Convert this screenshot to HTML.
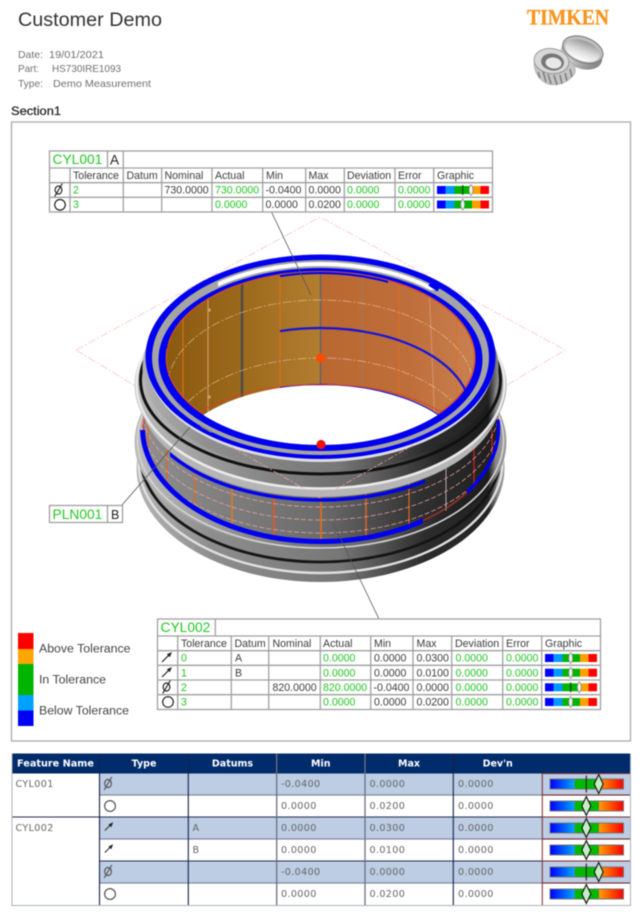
<!DOCTYPE html>
<html><head><meta charset="utf-8"><title>Customer Demo</title>
<style>
html,body{margin:0;padding:0;background:#fff;width:644px;height:914px;overflow:hidden}
svg{display:block;filter:blur(.5px)}
text{font-family:"Liberation Sans",sans-serif}
.t{font-size:10.6px;fill:#3c3c3c}
.g{font-size:10.6px;fill:#22c522}
.b{font-family:"DejaVu Sans",sans-serif;font-size:9.6px;fill:#666;letter-spacing:.35px}
.h{font-family:"DejaVu Sans",sans-serif;font-size:9.5px;font-weight:bold;fill:#fff;text-anchor:middle}
.l{stroke:#a0a0a0;stroke-width:1.3;fill:none}
.i{fill:none;stroke:#222;stroke-width:1.2}
.k{fill:none;stroke:#555;stroke-width:1.2}
</style></head><body>
<svg width="644" height="914" viewBox="0 0 644 914" xmlns="http://www.w3.org/2000/svg">
<defs>
<linearGradient id="gr1" gradientUnits="userSpaceOnUse" x1="135" x2="507" y1="0" y2="0"><stop offset="0" stop-color="#b5b5b5"/><stop offset=".2" stop-color="#8e8e8e"/><stop offset=".55" stop-color="#777"/><stop offset=".78" stop-color="#2c2c2c"/><stop offset=".95" stop-color="#222"/><stop offset=".975" stop-color="#8a8a8a"/><stop offset="1" stop-color="#a0a0a0"/></linearGradient>
<linearGradient id="gr2" gradientUnits="userSpaceOnUse" x1="135" x2="507" y1="0" y2="0"><stop offset="0" stop-color="#bcbcbc"/><stop offset=".3" stop-color="#8c8c8c"/><stop offset=".62" stop-color="#666"/><stop offset=".82" stop-color="#262626"/><stop offset=".95" stop-color="#1c1c1c"/><stop offset=".97" stop-color="#888"/><stop offset="1" stop-color="#a0a0a0"/></linearGradient>
<linearGradient id="band" gradientUnits="userSpaceOnUse" x1="140" x2="500" y1="0" y2="0"><stop offset="0" stop-color="#8f8f8f"/><stop offset=".5" stop-color="#6c6c6c"/><stop offset=".78" stop-color="#303030"/><stop offset="1" stop-color="#1d1d1d"/></linearGradient>
<linearGradient id="wall" gradientUnits="userSpaceOnUse" x1="166" x2="476" y1="0" y2="0"><stop offset="0" stop-color="#8a5a10"/><stop offset=".25" stop-color="#9c6a1c"/><stop offset=".497" stop-color="#b37d30"/><stop offset=".5" stop-color="#ba6830"/><stop offset=".8" stop-color="#bf6f3c"/><stop offset="1" stop-color="#c98150"/></linearGradient>
<linearGradient id="bb" x1="0" x2="1" y1="0" y2="0"><stop offset="0" stop-color="#0000ff"/><stop offset="1" stop-color="#00a6ff"/></linearGradient>
<linearGradient id="ob" x1="0" x2="1" y1="0" y2="0"><stop offset="0" stop-color="#ff9d00"/><stop offset="1" stop-color="#ff0000"/></linearGradient>
<linearGradient id="steel" x1="0" x2="1" y1="0" y2=".3"><stop offset="0" stop-color="#8a8a8a"/><stop offset=".35" stop-color="#e4e4e4"/><stop offset=".65" stop-color="#b4b4b4"/><stop offset="1" stop-color="#8a8a8a"/></linearGradient>
<linearGradient id="steel2" x1="0" x2="0" y1="0" y2="1"><stop offset="0" stop-color="#999"/><stop offset=".55" stop-color="#ddd"/><stop offset="1" stop-color="#fff"/></linearGradient>
<clipPath id="cInner"><ellipse cx="320.5" cy="358" rx="155" ry="87"/></clipPath>
<clipPath id="cBand"><ellipse cx="320.5" cy="430" rx="179" ry="113"/></clipPath>
<clipPath id="cL"><rect x="140" y="430" width="283" height="130"/></clipPath>
<clipPath id="cR"><rect x="467" y="420" width="40" height="90"/></clipPath>
<clipPath id="cU"><rect x="170" y="440" width="255" height="70"/></clipPath>
<clipPath id="cW1"><rect x="280" y="260" width="108" height="30"/></clipPath>
<clipPath id="cW2"><rect x="280" y="320" width="190" height="72"/></clipPath>
<clipPath id="cW3"><rect x="280" y="380" width="160" height="40"/></clipPath>
<clipPath id="cTop"><rect x="218" y="250" width="225" height="40"/></clipPath>
<g id="mini"><rect x="0" y="-4" width="8.5" height="8" fill="#0000ff"/><rect x="8.5" y="-4" width="9" height="8" fill="#0099ff"/><rect x="17.5" y="-4" width="17.5" height="8" fill="#00b400"/><rect x="35" y="-4" width="8.5" height="8" fill="#ffa000"/><rect x="43.5" y="-4" width="8.5" height="8" fill="#ff0000"/></g>
<path id="mk" d="M0-5.5C2.6-2.5 2.6 2.5 0 5.5C-2.6 2.5-2.6-2.5 0-5.5Z" fill="#f4f4f4" stroke="#888" stroke-width=".8"/>
<g id="bar"><rect x="549.5" y="-5.5" width="74.5" height="11" fill="#777"/><rect x="550.5" y="-4.5" width="24" height="9" fill="url(#bb)"/><rect x="575" y="-4.5" width="23.5" height="9" fill="#00b800"/><rect x="599" y="-4.5" width="24" height="9" fill="url(#ob)"/></g>
<path id="dm" d="M0-9.5L4.5 0L0 9.5L-4.5 0Z" fill="#c6eec6" stroke="#111" stroke-width="1.1"/>
<g id="dia"><ellipse cx="0" cy="0" rx="3.4" ry="4"/><path d="M3.8-6.5L-3.8 6.5"/></g>
<g id="arr"><path d="M-5 5L3 -3" stroke-width="1.2" fill="none"/><path d="M5-5L-.2-2.8L2.8.2Z" fill="#222" stroke="none"/></g>
<g id="arr2"><path d="M-4.2 4L2 -2" stroke-width="1.1" fill="none"/><path d="M4.2-4.2L-.6-2L2.2.8Z" fill="#222" stroke="none"/></g>
</defs>

<!-- header -->
<text x="18" y="26" font-size="19.5" fill="#333" textLength="144" lengthAdjust="spacingAndGlyphs">Customer Demo</text>
<g font-size="10.3" fill="#707070">
<text x="18" y="58" textLength="25" lengthAdjust="spacingAndGlyphs">Date:</text><text x="49" y="58" textLength="55" lengthAdjust="spacingAndGlyphs">19/01/2021</text>
<text x="18" y="72" textLength="21" lengthAdjust="spacingAndGlyphs">Part:</text><text x="52" y="72" textLength="69" lengthAdjust="spacingAndGlyphs">HS730IRE1093</text>
<text x="18" y="87" textLength="25" lengthAdjust="spacingAndGlyphs">Type:</text><text x="53" y="87" textLength="98" lengthAdjust="spacingAndGlyphs">Demo Measurement</text>
</g>
<text x="527" y="24.5" font-size="22" font-weight="bold" fill="#f7941e" stroke="#f7941e" stroke-width=".3" style="font-family:'Liberation Serif',serif" textLength="82" lengthAdjust="spacingAndGlyphs">TIMKEN</text>
<!-- bearing -->
<g transform="rotate(20 582 52)"><ellipse cx="582.5" cy="55" rx="21.5" ry="13.5" fill="url(#steel)"/><ellipse cx="582" cy="49.5" rx="21" ry="12.5" fill="#bdbdbd" stroke="#707070" stroke-width=".9"/><ellipse cx="582" cy="50.5" rx="18" ry="10" fill="url(#steel2)"/></g>
<g><path d="M534 63C534 72 539 81 548 84C557 87 570 82 575 73C576 70 575 66 572 63L550 50Z" fill="#c4c4c4" stroke="#999" stroke-width=".5"/>
<path d="M538 72L540 78M543 71L546 82M548 74L551 84M554 75L557 85M560 75L562 84M565 73L567 81M570 69L572 77" stroke="#808080" stroke-width="1.6" fill="none"/>
<ellipse cx="551.5" cy="61" rx="17.5" ry="12.5" transform="rotate(8 551.5 61)" fill="#d8d8d8" stroke="#8a8a8a" stroke-width=".8"/><ellipse cx="552.5" cy="62" rx="11.5" ry="8.5" transform="rotate(8 552.5 62)" fill="#777"/><ellipse cx="553.5" cy="63" rx="8" ry="5.5" transform="rotate(8 553.5 63)" fill="#e8e8e8"/></g>
<text x="11" y="115" font-size="11.5" fill="#222" stroke="#222" stroke-width=".25" textLength="50" lengthAdjust="spacingAndGlyphs">Section1</text>
<rect x="11.5" y="122" width="619" height="619" fill="none" stroke="#aaa" stroke-width="1.3"/>

<!-- construction diamond -->
<path d="M76 350L320 217L565 350L320 498Z" fill="none" stroke="#f8bcbc" stroke-width=".7" stroke-dasharray="8 2 2 2"/>

<!-- lower body -->
<ellipse cx="320.5" cy="468" rx="184" ry="114" fill="url(#gr1)"/>
<ellipse cx="320.5" cy="462" rx="182" ry="111" fill="none" stroke="#e0e0e0" stroke-width="2.4"/>
<ellipse cx="320.5" cy="455" rx="180" ry="107" fill="none" stroke="#151515" stroke-width="2.8"/>
<ellipse cx="320.5" cy="442" rx="186" ry="108" fill="url(#gr2)"/>
<ellipse cx="320.5" cy="440" rx="183" ry="108" fill="none" stroke="#d4d4d4" stroke-width="1.6"/>
<!-- band -->
<ellipse cx="320.5" cy="430" rx="179" ry="113" fill="url(#band)"/>
<g clip-path="url(#cBand)" fill="none">
<g stroke="#e4651f" stroke-width="1.2"><path d="M148 400V480M167 400V510M195 400V520"/><path d="M232 440V535" stroke="#e87a1e" stroke-width="1.4"/><path d="M274 470V545" stroke-width="1.5" stroke="#f0541a"/><path d="M321 480V550" stroke-width="1.5" stroke="#f07010"/><path d="M366 480V545" stroke-width="1.4"/><path d="M409 470V540"/><path d="M446 450V520" stroke="#cfcfcf" stroke-width=".8"/><path d="M474 440V500" stroke="#d32020"/><path d="M492 430V480" stroke="#d32020"/></g>
<g stroke="#f0a8a0" stroke-width=".7" stroke-dasharray="5 2"><ellipse cx="320.5" cy="407" rx="179" ry="100"/><ellipse cx="320.5" cy="420" rx="179" ry="100"/><ellipse cx="320.5" cy="433" rx="179" ry="100"/></g>
<ellipse cx="320.5" cy="430" rx="177" ry="111" stroke="#e03020" stroke-width="1"/>
</g>
<ellipse cx="320.5" cy="428" rx="178" ry="113.5" fill="none" stroke="#0000f0" stroke-width="5" clip-path="url(#cL)"/>
<ellipse cx="320.5" cy="428" rx="178" ry="113" fill="none" stroke="#0000f0" stroke-width="3.4" clip-path="url(#cR)"/>
<ellipse cx="320.5" cy="395" rx="181" ry="102" fill="#b5b5b5"/>
<ellipse cx="320.5" cy="400" rx="179" ry="100" fill="none" stroke="#0000f0" stroke-width="3.4" clip-path="url(#cU)"/>
<!-- upper body -->
<ellipse cx="320.5" cy="385" rx="186" ry="103" fill="url(#gr2)"/>
<ellipse cx="320.5" cy="384" rx="184" ry="104.5" fill="none" stroke="#eaeaea" stroke-width="2.6"/>
<ellipse cx="320.5" cy="380" rx="180" ry="94" fill="none" stroke="#111" stroke-width="3"/>
<ellipse cx="320.5" cy="368" rx="178" ry="104" fill="url(#gr1)"/>
<ellipse cx="320.5" cy="360" rx="174" ry="102" fill="#dedede"/>
<!-- ring -->
<ellipse cx="320.5" cy="356.75" rx="175" ry="102.25" fill="#0000f0"/>
<ellipse cx="320.5" cy="357.5" rx="168.5" ry="97.5" fill="#a4a4a4"/>
<ellipse cx="320.5" cy="358" rx="165" ry="94" fill="none" stroke="#fff" stroke-width="4" clip-path="url(#cTop)"/>
<ellipse cx="320.5" cy="359.5" rx="162" ry="91.5" fill="#0000f0"/>
<ellipse cx="320.5" cy="358" rx="155" ry="87" fill="url(#wall)"/>
<g clip-path="url(#cInner)" fill="none">
<path d="M183 260V450" stroke="#e0701f" stroke-width="1"/><path d="M208 260V450" stroke="#d9a070" stroke-width="1"/>
<path d="M242 260V450" stroke="#4a4a48" stroke-width="2.4"/>
<path d="M280 260V450" stroke="#e26b25" stroke-width="1"/>
<path d="M320.5 260V450" stroke="#666" stroke-width="1.6"/>
<path d="M362 260V450" stroke="#9a7a60" stroke-width="1"/>
<path d="M399 260V450" stroke="#e26b25" stroke-width="1"/>
<path d="M428 260L436 450" stroke="#d99a78" stroke-width=".8"/>
<path d="M457 260V450" stroke="#e26b25" stroke-width=".8"/>
<g stroke="#eec8a8" stroke-width=".7" stroke-dasharray="9 2 2 2" opacity=".8"><ellipse cx="320.5" cy="388" rx="153" ry="88"/><ellipse cx="320.5" cy="446" rx="153" ry="88"/></g>
<ellipse cx="320.5" cy="358" rx="154" ry="86" stroke="#e24a20" stroke-width="1"/>
<ellipse cx="320.5" cy="360" rx="153" ry="87" stroke="#0000f0" stroke-width="2" clip-path="url(#cW1)"/>
<ellipse cx="320.5" cy="412" rx="150" ry="84" stroke="#1414d8" stroke-width="2.2" clip-path="url(#cW2)"/>
<ellipse cx="320.5" cy="465" rx="150" ry="80" stroke="#1414d8" stroke-width="2" clip-path="url(#cW3)"/>
<ellipse cx="320.5" cy="465" rx="150" ry="80" fill="#fff"/>
<path d="M170 440A150 80 0 0 1 320.5 385A150 80 0 0 1 471 440" stroke="#e03c20" stroke-width=".8"/>
</g>
<circle cx="209" cy="310" r="1.8" fill="#d99a60"/><circle cx="209" cy="397" r="1.8" fill="#d99a60"/>
<path d="M168 337Q167 340 166 348" stroke="#0000f0" stroke-width="2.4" fill="none"/>
<path d="M430 283L439 289" stroke="#0000f0" stroke-width="6"/>
<path d="M201 426L212 432" stroke="#8a8a8a" stroke-width="2"/>
<circle cx="320.5" cy="358" r="4.6" fill="#ff4a00"/>
<circle cx="321" cy="444.5" r="4.6" fill="#f01010"/>
<path d="M232 447L320 498L417 443" fill="none" stroke="#f2a8a0" stroke-width=".7" stroke-dasharray="6 2 2 2"/>

<!-- leaders -->
<path d="M271.5 212L311 295M122 505L190 427M333 523L379 619" stroke="#555" stroke-width=".8" fill="none"/>

<!-- CYL001 table -->
<rect x="49.5" y="151" width="443" height="61" fill="#fff" class="l"/>
<path class="l" d="M49.5 168H492.5M49.5 182.7H492.5M49.5 197.3H492.5M107.5 151V168M123.3 151V212M70 168V212M161.7 168V212M212 168V212M262.7 168V212M305.7 168V212M344.3 168V212M395 168V212M433.7 168V212"/>
<text x="52.5" y="164" font-size="13.8" fill="#22c822">CYL001</text><text x="110" y="164.5" font-size="13.5" fill="#222">A</text>
<text x="73" y="179" class="t">Tolerance</text><text x="126.5" y="179" class="t">Datum</text><text x="164.5" y="179" class="t">Nominal</text><text x="215" y="179" class="t">Actual</text><text x="266" y="179" class="t">Min</text><text x="308.5" y="179" class="t">Max</text><text x="347" y="179" class="t">Deviation</text><text x="398" y="179" class="t">Error</text><text x="437" y="179" class="t">Graphic</text>
<text x="73" y="193.5" class="g">2</text><text x="164.5" y="193.5" class="t">730.0000</text><text x="215" y="193.5" class="g">730.0000</text><text x="265.5" y="193.5" class="t">-0.0400</text><text x="308.5" y="193.5" class="t">0.0000</text><text x="347" y="193.5" class="g">0.0000</text><text x="398" y="193.5" class="g">0.0000</text>
<text x="73" y="208" class="g">3</text><text x="215" y="208" class="g">0.0000</text><text x="265.5" y="208" class="t">0.0000</text><text x="308.5" y="208" class="t">0.0200</text><text x="347" y="208" class="g">0.0000</text><text x="398" y="208" class="g">0.0000</text>
<use href="#dia" x="58.5" y="190" class="i"/><circle cx="60" cy="204.8" r="5.3" class="i"/>
<use href="#mini" x="437" y="190"/><path d="M462.7 185V195" stroke="#222" stroke-width="1"/><use href="#mk" x="471" y="190"/>
<use href="#mini" x="437" y="204.5"/><use href="#mk" x="462.7" y="204.5"/>

<!-- PLN001 -->
<rect x="49.5" y="505.5" width="73" height="17" fill="#fff" class="l"/><path class="l" d="M107.5 505.5V522.5"/>
<text x="52.5" y="519" font-size="13.8" fill="#22c822">PLN001</text><text x="111" y="519" font-size="12.5" fill="#222">B</text>

<!-- Legend -->
<rect x="18" y="633" width="15.5" height="16" fill="#ff0000"/><rect x="18" y="649" width="15.5" height="15" fill="#ffa500"/><rect x="18" y="664" width="15.5" height="31" fill="#00b400"/><rect x="18" y="695" width="15.5" height="15.5" fill="#00a2ff"/><rect x="18" y="710.5" width="15.5" height="15.5" fill="#0000f5"/>
<g font-size="11.5" fill="#444">
<text x="39" y="652.5" textLength="91.5" lengthAdjust="spacingAndGlyphs">Above Tolerance</text>
<text x="39" y="683.5" textLength="67" lengthAdjust="spacingAndGlyphs">In Tolerance</text>
<text x="39" y="714.5" textLength="90" lengthAdjust="spacingAndGlyphs">Below Tolerance</text>
</g>

<!-- CYL002 table -->
<rect x="157.5" y="619" width="443" height="90.5" fill="#fff" class="l"/>
<path class="l" d="M157.5 636H600.5M157.5 650.7H600.5M157.5 665.3H600.5M157.5 680H600.5M157.5 694.7H600.5M215.3 619V636M177.7 636V709.5M231.3 636V709.5M268.7 636V709.5M320.3 636V709.5M370.7 636V709.5M413 636V709.5M451.7 636V709.5M502.7 636V709.5M541.7 636V709.5"/>
<text x="160.5" y="632" font-size="13.8" fill="#22c822">CYL002</text>
<text x="181" y="647" class="t">Tolerance</text><text x="234.5" y="647" class="t">Datum</text><text x="272.5" y="647" class="t">Nominal</text><text x="323" y="647" class="t">Actual</text><text x="374" y="647" class="t">Min</text><text x="416.5" y="647" class="t">Max</text><text x="455" y="647" class="t">Deviation</text><text x="506" y="647" class="t">Error</text><text x="545" y="647" class="t">Graphic</text>
<text x="181" y="661.5" class="g">0</text><text x="235" y="661.5" class="t">A</text><text x="323" y="661.5" class="g">0.0000</text><text x="374" y="661.5" class="t">0.0000</text><text x="416.5" y="661.5" class="t">0.0300</text><text x="455.5" y="661.5" class="g">0.0000</text><text x="506" y="661.5" class="g">0.0000</text>
<text x="181" y="676.5" class="g">1</text><text x="235" y="676.5" class="t">B</text><text x="323" y="676.5" class="g">0.0000</text><text x="374" y="676.5" class="t">0.0000</text><text x="416.5" y="676.5" class="t">0.0100</text><text x="455.5" y="676.5" class="g">0.0000</text><text x="506" y="676.5" class="g">0.0000</text>
<text x="181" y="691" class="g">2</text><text x="272.5" y="691" class="t">820.0000</text><text x="323" y="691" class="g">820.0000</text><text x="373.5" y="691" class="t">-0.0400</text><text x="416.5" y="691" class="t">0.0000</text><text x="455.5" y="691" class="g">0.0000</text><text x="506" y="691" class="g">0.0000</text>
<text x="181" y="705.5" class="g">3</text><text x="323" y="705.5" class="g">0.0000</text><text x="374" y="705.5" class="t">0.0000</text><text x="416.5" y="705.5" class="t">0.0200</text><text x="455.5" y="705.5" class="g">0.0000</text><text x="506" y="705.5" class="g">0.0000</text>
<use href="#arr" x="167" y="657" stroke="#222"/><use href="#arr" x="167" y="672" stroke="#222"/><use href="#dia" x="166.5" y="687" class="i"/><circle cx="168" cy="702" r="5.3" class="i"/>
<use href="#mini" x="545" y="658"/><use href="#mk" x="570.7" y="658"/>
<use href="#mini" x="545" y="672.7"/><use href="#mk" x="570.7" y="672.7"/>
<use href="#mini" x="545" y="687.3"/><path d="M570.7 682.3V692.3" stroke="#222" stroke-width="1"/><use href="#mk" x="579.3" y="687.3"/>
<use href="#mini" x="545" y="702"/><use href="#mk" x="570.7" y="702"/>

<!-- Bottom table -->
<rect x="12" y="753.5" width="618.5" height="20" fill="#012c6c"/>
<rect x="99.5" y="773.5" width="531" height="21.5" fill="#bccde4"/>
<rect x="99.5" y="817" width="531" height="22" fill="#bccde4"/>
<rect x="99.5" y="861" width="531" height="22" fill="#bccde4"/>
<text x="55.5" y="766.5" class="h" textLength="77" lengthAdjust="spacingAndGlyphs">Feature Name</text>
<text x="144" y="766.5" class="h">Type</text><text x="232.5" y="766.5" class="h">Datums</text><text x="320.8" y="766.5" class="h">Min</text><text x="409" y="766.5" class="h">Max</text><text x="497.7" y="766.5" class="h">Dev'n</text>
<path d="M99.5 795H630.5M99.5 839H630.5M99.5 883H630.5" stroke="#7f8aa0" stroke-width="1.2"/>
<path d="M12 817H630.5M99.5 861H630.5" stroke="#232d50" stroke-width="1"/>
<path d="M99.5 753.5V905M188.3 753.5V905M453.3 753.5V905" stroke="#14204a" stroke-width="1.1"/>
<path d="M276.7 753.5V905M365 753.5V905" stroke="#6b7080" stroke-width="1.3"/>
<path d="M542.3 773.5V905M542.3 795H630.5M542.3 817H630.5M542.3 839H630.5M542.3 861H630.5M542.3 883H630.5M542.3 773.5H630.5" stroke="#7c2a2a" stroke-width="1" fill="none"/>
<path d="M12 753.5V905.5H630.5V753.5" fill="none" stroke="#aeb0b8" stroke-width="1"/>
<text x="15.5" y="786.8" class="b">CYL001</text><text x="15.5" y="830.8" class="b">CYL002</text>
<text x="192.5" y="831" class="b">A</text><text x="192.5" y="853" class="b">B</text>
<text x="281" y="786.8" class="b">-0.0400</text><text x="369.5" y="786.8" class="b">0.0000</text><text x="458" y="786.8" class="b">0.0000</text>
<text x="281" y="808.8" class="b">0.0000</text><text x="369.5" y="808.8" class="b">0.0200</text><text x="458" y="808.8" class="b">0.0000</text>
<text x="281" y="830.8" class="b">0.0000</text><text x="369.5" y="830.8" class="b">0.0300</text><text x="458" y="830.8" class="b">0.0000</text>
<text x="281" y="852.8" class="b">0.0000</text><text x="369.5" y="852.8" class="b">0.0100</text><text x="458" y="852.8" class="b">0.0000</text>
<text x="281" y="874.8" class="b">-0.0400</text><text x="369.5" y="874.8" class="b">0.0000</text><text x="458" y="874.8" class="b">0.0000</text>
<text x="281" y="896.8" class="b">0.0000</text><text x="369.5" y="896.8" class="b">0.0200</text><text x="458" y="896.8" class="b">0.0000</text>
<use href="#dia" x="108" y="783.5" class="k"/><circle cx="110" cy="806" r="5.4" class="k"/>
<use href="#arr2" x="109" y="826.5" stroke="#333"/><use href="#arr2" x="109" y="848.5" stroke="#333"/>
<use href="#dia" x="108" y="871.5" class="k"/><circle cx="110" cy="894" r="5.4" class="k"/>
<use href="#bar" y="784"/><path d="M586.3 775.5V792.5" stroke="#111" stroke-width="1"/><use href="#dm" x="598.7" y="784"/>
<use href="#bar" y="806"/><use href="#dm" x="586.3" y="806"/>
<use href="#bar" y="828"/><use href="#dm" x="586.3" y="828"/>
<use href="#bar" y="850"/><use href="#dm" x="586.3" y="850"/>
<use href="#bar" y="872"/><path d="M586.3 863.5V880.5" stroke="#111" stroke-width="1"/><use href="#dm" x="598.7" y="872"/>
<use href="#bar" y="894"/><use href="#dm" x="586.3" y="894"/>
</svg>
</body></html>
